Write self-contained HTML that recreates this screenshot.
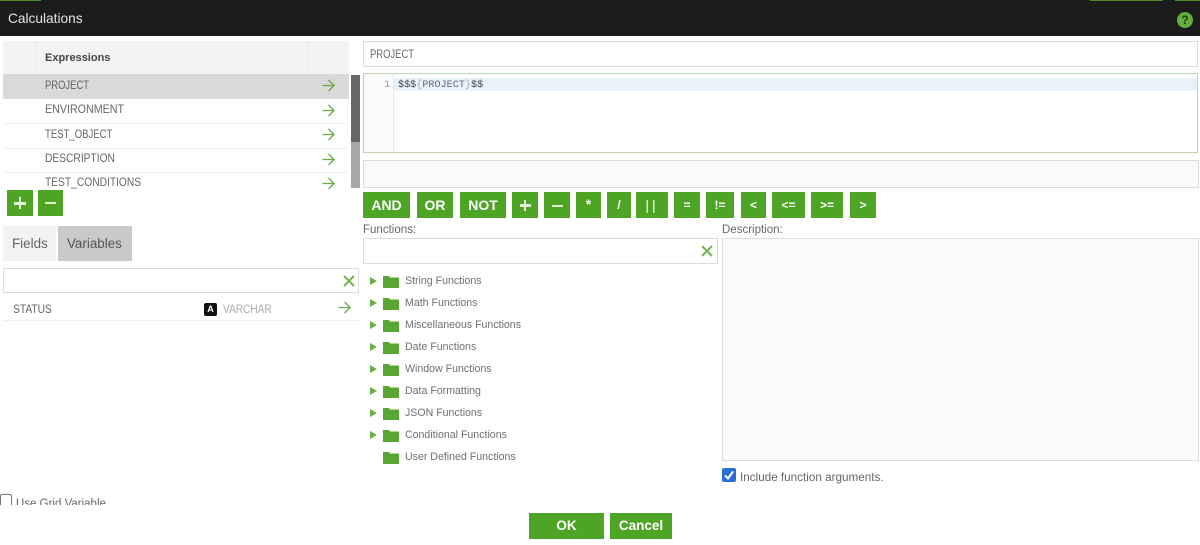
<!DOCTYPE html>
<html><head><meta charset="utf-8"><style>
html,body{margin:0;padding:0;width:1200px;height:545px;overflow:hidden;background:#fff}
body{position:relative;font-family:"Liberation Sans",Arial,sans-serif;color:#5a5a5a}
.a{position:absolute}
.t{position:absolute;white-space:nowrap;font-size:11.5px;line-height:14px;color:#666;transform-origin:0 50%}
.box{position:absolute;box-sizing:border-box;border:1px solid #dcdcdc;background:#fff}
.b{position:absolute;top:192px;height:26px;background:#4ea424;color:#fff;font-weight:bold;font-size:14px;line-height:26px;text-align:center;white-space:nowrap}
.arr{position:absolute;width:13px;height:13px}
.line{position:absolute;height:1px;background:#f0f0f0}
.tri{position:absolute;left:370px;width:0;height:0;border-left:7px solid #6aae49;border-top:4.5px solid transparent;border-bottom:4.5px solid transparent}
.fold{position:absolute;left:383px;width:16px;height:12px}
.f{position:absolute;left:405px;white-space:nowrap;font-size:10.6px;line-height:14px;color:#707070}
</style></head><body>
<svg width="0" height="0" style="position:absolute"><defs>
<symbol id="ar" viewBox="0 0 13 13"><path d="M.5 6.5H12M6.5 1L12 6.5L6.5 12" fill="none" stroke="#66ab44" stroke-width="1.3"/></symbol>
<symbol id="fo" viewBox="0 0 16 12"><path d="M0 0H6L7 1.5H16V12H0Z" fill="#5aa635"/></symbol>
<symbol id="x" viewBox="0 0 12 12"><path d="M1 1L11 11M11 1L1 11" fill="none" stroke="#74b354" stroke-width="2"/></symbol>
</defs></svg>

<div class="a" style="left:0;top:0;width:1200px;height:36px;background:#1c1c1c"></div>
<div class="a" style="left:0;top:0;width:41px;height:1px;background:#4d8a2c"></div>
<div class="a" style="left:1090px;top:0;width:73px;height:1px;background:#4d8a2c"></div>
<div class="a" style="left:1175px;top:0;width:25px;height:1px;background:#4d8a2c"></div>
<div class="t" style="left:8px;top:10px;font-size:13.7px;line-height:17px;color:#e4e4e4">Calculations</div>
<div class="a" style="left:1177px;top:12px;width:16px;height:16px;border-radius:50%;background:#62ad3d;color:#1f3d12;font-weight:bold;font-size:12px;line-height:16px;text-align:center">?</div>

<div class="a" style="left:3px;top:41px;width:346px;height:33px;background:#f3f3f3"></div>
<div class="a" style="left:35px;top:41px;width:1px;height:33px;background:#ececec"></div>
<div class="a" style="left:308px;top:41px;width:1px;height:33px;background:#ececec"></div>
<div class="t" style="left:45px;top:51px;font-weight:bold;font-size:11px;color:#444">Expressions</div>
<div class="a" style="left:3px;top:74px;width:346px;height:25px;background:#d9d9d9"></div>
<div class="line" style="left:3px;top:123px;width:346px"></div>
<div class="line" style="left:3px;top:148px;width:346px"></div>
<div class="line" style="left:3px;top:172px;width:346px"></div>
<div class="t" style="left:45px;top:79px;transform:scaleX(.82)">PROJECT</div>
<div class="t" style="left:45px;top:103px;transform:scaleX(.93)">ENVIRONMENT</div>
<div class="t" style="left:45px;top:128px;transform:scaleX(.83)">TEST_OBJECT</div>
<div class="t" style="left:45px;top:152px;transform:scaleX(.89)">DESCRIPTION</div>
<div class="t" style="left:45px;top:176px;transform:scaleX(.89)">TEST_CONDITIONS</div>
<svg class="arr" style="left:322px;top:79px"><use href="#ar"/></svg>
<svg class="arr" style="left:322px;top:104px"><use href="#ar"/></svg>
<svg class="arr" style="left:322px;top:128px"><use href="#ar"/></svg>
<svg class="arr" style="left:322px;top:153px"><use href="#ar"/></svg>
<svg class="arr" style="left:322px;top:177px"><use href="#ar"/></svg>
<div class="a" style="left:351px;top:75px;width:9px;height:67px;background:#666"></div>
<div class="a" style="left:351px;top:142px;width:9px;height:46px;background:#a8a8a8"></div>
<div class="a" style="left:0;top:190px;width:360px;height:5px;background:#fff"></div>

<div class="a" style="left:7px;top:190px;width:26px;height:26px;background:#4ea424"></div>
<div class="a" style="left:14px;top:202px;width:12px;height:2.5px;background:#e6f3de"></div>
<div class="a" style="left:18.75px;top:197px;width:2.5px;height:12px;background:#e6f3de"></div>
<div class="a" style="left:38px;top:190px;width:25px;height:26px;background:#4ea424"></div>
<div class="a" style="left:45px;top:202px;width:11px;height:2px;background:#dcefd0"></div>

<div class="a" style="left:3px;top:226px;width:53px;height:35px;background:#f2f2f2"></div>
<div class="a" style="left:58px;top:226px;width:74px;height:35px;background:#c9c9c9"></div>
<div class="t" style="left:12px;top:235px;font-size:13.4px;line-height:17px;color:#666">Fields</div>
<div class="t" style="left:67px;top:235px;font-size:13.4px;line-height:17px;color:#555">Variables</div>
<div class="box" style="left:3px;top:268px;width:356px;height:25px"></div>
<svg class="a" style="left:343px;top:275px;width:12px;height:12px"><use href="#x"/></svg>
<div class="t" style="left:13px;top:303px;transform:scaleX(.89)">STATUS</div>
<div class="a" style="left:204px;top:303px;width:13px;height:13px;background:#111;border-radius:2px;color:#fff;font-size:9px;font-weight:bold;line-height:13px;text-align:center">A</div>
<div class="t" style="left:223px;top:303px;color:#aaa;transform:scaleX(.88)">VARCHAR</div>
<svg class="arr" style="left:338px;top:301px"><use href="#ar"/></svg>
<div class="line" style="left:3px;top:320px;width:356px"></div>

<div class="a" style="left:0;top:494px;width:12px;height:11px;box-sizing:border-box;border:1px solid #777;border-bottom:0;border-radius:2px 2px 0 0;background:#fff"></div>
<div class="a" style="left:0;top:494px;width:120px;height:11px;overflow:hidden"><div class="t" style="left:16px;top:3px;font-size:11.5px">Use Grid Variable</div></div>

<div class="box" style="left:363px;top:41px;width:835px;height:26px"></div>
<div class="t" style="left:370px;top:48px;transform:scaleX(.82)">PROJECT</div>
<div class="box" style="left:363px;top:73px;width:835px;height:80px;border-color:#bdd3b0"></div>
<div class="a" style="left:364px;top:74px;width:30px;height:78px;background:#fbfbfb;border-right:1px solid #e8e8e8;box-sizing:border-box"></div>
<div class="a" style="left:394px;top:78px;width:803px;height:13px;background:#e8f2fb"></div>
<div class="t" style="left:384px;top:78px;font-family:'Liberation Mono',monospace;font-size:10.5px;color:#999">1</div>
<div class="t" style="left:398px;top:78px;font-family:'Liberation Mono',monospace;font-size:10.5px;color:#444;transform:scaleX(.965)">$$$<span style="color:#aaa">{</span><span style="color:#667">PROJECT</span><span style="color:#aaa">}</span>$$</div>
<div class="box" style="left:363px;top:160px;width:836px;height:28px;background:#fafafa"></div>

<div class="b" style="left:363px;width:47px">AND</div>
<div class="b" style="left:417px;width:36px">OR</div>
<div class="b" style="left:460px;width:46px">NOT</div>
<div class="b" style="left:512px;width:26px"><div class="a" style="left:7.5px;top:12px;width:11px;height:2.5px;background:#e6f3de"></div><div class="a" style="left:11.75px;top:7.75px;width:2.5px;height:11px;background:#e6f3de"></div></div>
<div class="b" style="left:544px;width:26px"><div class="a" style="left:8px;top:13px;width:11px;height:2px;background:#dcefd0"></div></div>
<div class="b" style="left:576px;width:25px;line-height:25px">*</div>
<div class="b" style="left:607px;width:24px;font-size:12px">/</div>
<div class="b" style="left:636px;width:32px;font-weight:normal;letter-spacing:3px">||</div>
<div class="b" style="left:674px;width:26px;font-size:12px">=</div>
<div class="b" style="left:706px;width:28px;font-size:12px">!=</div>
<div class="b" style="left:741px;width:25px;font-size:12px">&lt;</div>
<div class="b" style="left:772px;width:33px;font-size:12px">&lt;=</div>
<div class="b" style="left:811px;width:32px;font-size:12px">&gt;=</div>
<div class="b" style="left:850px;width:26px;font-size:12px">&gt;</div>

<div class="t" style="left:363px;top:223px;font-size:11.5px">Functions:</div>
<div class="t" style="left:722px;top:223px;font-size:11.5px">Description:</div>
<div class="box" style="left:363px;top:238px;width:355px;height:26px"></div>
<svg class="a" style="left:701px;top:245px;width:12px;height:12px"><use href="#x"/></svg>
<div class="box" style="left:722px;top:238px;width:477px;height:223px;background:#fafafa"></div>

<div class="tri" style="top:277px"></div><svg class="fold" style="top:276px"><use href="#fo"/></svg><div class="f" style="top:274px">String Functions</div>
<div class="tri" style="top:299px"></div><svg class="fold" style="top:298px"><use href="#fo"/></svg><div class="f" style="top:296px">Math Functions</div>
<div class="tri" style="top:321px"></div><svg class="fold" style="top:320px"><use href="#fo"/></svg><div class="f" style="top:318px">Miscellaneous Functions</div>
<div class="tri" style="top:343px"></div><svg class="fold" style="top:342px"><use href="#fo"/></svg><div class="f" style="top:340px">Date Functions</div>
<div class="tri" style="top:365px"></div><svg class="fold" style="top:364px"><use href="#fo"/></svg><div class="f" style="top:362px">Window Functions</div>
<div class="tri" style="top:387px"></div><svg class="fold" style="top:386px"><use href="#fo"/></svg><div class="f" style="top:384px">Data Formatting</div>
<div class="tri" style="top:409px"></div><svg class="fold" style="top:408px"><use href="#fo"/></svg><div class="f" style="top:406px">JSON Functions</div>
<div class="tri" style="top:431px"></div><svg class="fold" style="top:430px"><use href="#fo"/></svg><div class="f" style="top:428px">Conditional Functions</div>
<svg class="fold" style="top:452px"><use href="#fo"/></svg><div class="f" style="top:450px">User Defined Functions</div>

<div class="a" style="left:722px;top:468px;width:14px;height:14px;background:#2a6fd6;border-radius:2px"><svg width="14" height="14" style="display:block"><path d="M3 7.5L6 10.5L11 3.5" fill="none" stroke="#fff" stroke-width="2"/></svg></div>
<div class="t" style="left:740px;top:471px;font-size:11.7px">Include function arguments.</div>

<div class="b" style="left:529px;top:513px;width:75px;height:26px;font-size:13.5px;line-height:26px">OK</div>
<div class="b" style="left:610px;top:513px;width:62px;height:26px;font-size:13.5px;line-height:26px">Cancel</div>
</body></html>
